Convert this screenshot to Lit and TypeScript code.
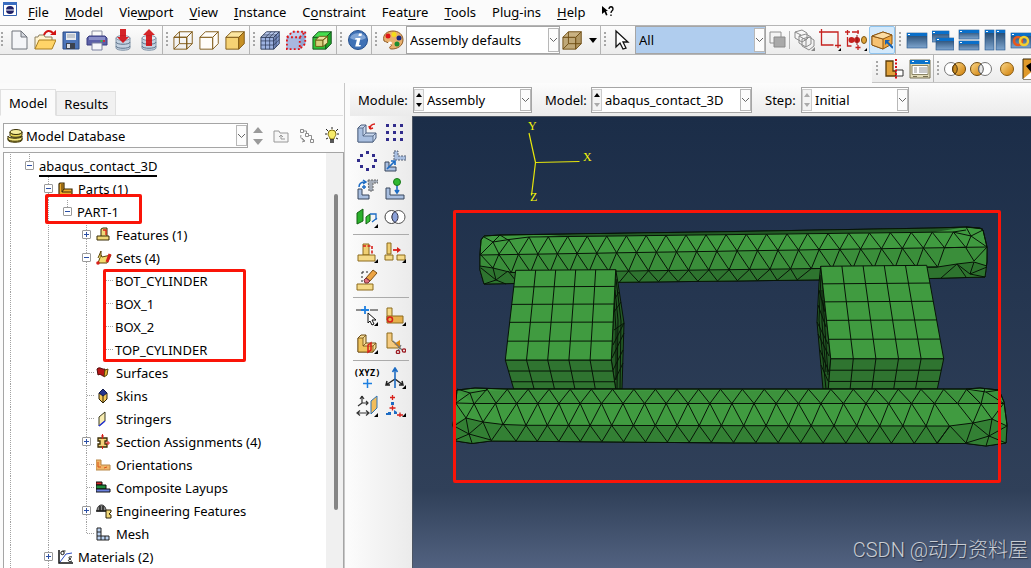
import { LitElement, html, svg, css, TemplateResult } from "lit";
import { customElement, property } from "lit/decorators.js";

type Glyph = TemplateResult;

/* ---------- small drawing helpers ---------- */

const corner = svg`<path d="M22 18v4h-4z" fill="#000"/>`;
const steel = "#a9bfe0";

const cube = (front: string, top: string, side: string, line: string) => svg`
  <path d="M1 8h14v13H1z" fill=${front} stroke=${line}/>
  <path d="M1 8l6-6h14l-6 6z" fill=${top} stroke=${line} stroke-linejoin="round"/>
  <path d="M15 8l6-6v13l-6 6z" fill=${side} stroke=${line} stroke-linejoin="round"/>`;

const disk = svg`
  <path d="M4 9v10c0 3 14 3 14 0V9" fill="#c5d3e2" stroke="#8496a8"/>
  <ellipse cx="11" cy="9" rx="7" ry="2.500" fill="#e3ebf3" stroke="#8496a8"/>
  <path d="M4 13c0 3 14 3 14 0M4 17c0 3 14 3 14 0" fill="none" stroke="#60758c"/>`;

const win = (x: number, y: number, w: number, h: number) => svg`
  <rect x=${x} y=${y} width=${w} height=${h} fill="url(#blue)" stroke="#1c4f86" stroke-width=".6"/>
  <rect x=${x} y=${y} width=${w} height="3" fill="#0a6fc9"/>
  <rect x=${x + 1} y=${y + 1} width="2" height="1" fill="#fff"/>`;

const blueDefs = svg`<defs><linearGradient id="blue" x1="0" y1="0" x2="0" y2="1">
  <stop offset="0" stop-color="#1a3f66"/><stop offset="1" stop-color="#7fa6cf"/></linearGradient></defs>`;

const ell = (fill: string, side: string, line: string) => svg`
  <path d="M2 6l3-3h5v8h7l3 0v5l-3 4H2z" fill=${side} stroke=${line}/>
  <path d="M2 6h5v8h10v6H2z" fill=${fill} stroke=${line} stroke-width=".8"/>
  <path d="M7 6l3-3M7 14l3-3M17 14l3-3" fill="none" stroke=${line} stroke-width=".8"/>`;

const orb = svg`<defs><linearGradient id="orb" x1="0" y1="0" x2="1" y2="1">
  <stop offset="0" stop-color="#fbd88a"/><stop offset="1" stop-color="#cf7d05"/></linearGradient></defs>`;

/* ---------- icons on a 22 x 22 grid ---------- */

const icons: Record<string, Glyph> = {
  new: svg`<path d="M4 2h9l6 6v12H4z" fill="#f4f5f8" stroke="#70747c"/><path d="M13 2v6h6z" fill="#d3d6dd" stroke="#70747c"/>`,
  open: svg`<path d="M1 20V8h3l1-2h5l1 2h7v4" fill="#fff3cf" stroke="#8d8060"/>
    <path d="M1 20l4-9h17l-4 9z" fill="#ffd468" stroke="#a87d1f"/>
    <path d="M10 6c2-5 6-5 9-2" fill="none" stroke="#d11313" stroke-width="2"/><path d="M16 6h6V1z" fill="#d11313"/>`,
  save: svg`<path d="M3 3h16v17H3z" fill="#4c74b8" stroke="#2a4a86"/><path d="M6 4h10v7H6z" fill="#e8ebef"/>
    <path d="M7 6h8M7 8h8" stroke="#9aa3ad"/><path d="M6 14h9v6H6z" fill="#3b4250"/><path d="M7 15h3v4H7z" fill="#d8dde5"/>`,
  print: svg`<path d="M6 2h10v6H6z" fill="#fafafa" stroke="#8b8fa0"/><path d="M1 9l2-2h16l2 2v7H1z" fill="#5c61a8" stroke="#393d80"/>
    <path d="M3 8h16v3H3z" fill="#8a8fc8"/><path d="M6 14h10v7H6z" fill="#f6f7fa" stroke="#7b80a0"/><circle cx="18" cy="12" r="1" fill="#e22"/><circle cx="15.500" cy="12" r="1" fill="#3c3"/>`,
  pull: svg`${disk}<path d="M8 0h6v8h3l-6 6-6-6h3z" fill="#cf0d12" opacity=".9"/>`,
  push: svg`${disk}<path d="M11 0l6 6h-3v11H8V6H5z" fill="#cf0d12" opacity=".9"/>`,
  wire: svg`${cube("none", "none", "none", "#7c5510")}<path d="M7 2v13h14M7 15l-6 6" fill="none" stroke="#7c5510"/>`,
  hidden: cube("#fffdf8", "#fffdf8", "#fffdf8", "#7c5510"),
  shaded: cube("#f5d274", "#fbe6a0", "#c79025", "#7c5510"),
  meshcube: svg`${cube("#9db2e0", "#b9c9ec", "#8298cb", "#2c3a58")}<path d="M6 8v13M10.500 8v13M1 12h14l6-6M1 16.500h14l6-6M3.500 5.500h14v13M6 8l6-6M10.500 8l6-6" fill="none" stroke="#2c3a58" stroke-width=".8"/>`,
  seedcube: svg`${cube("#a9b8e0", "#c2cdec", "#93a4d0", "#a9b8e0")}<path d="M1 8h14v13H1zM1 8l6-6h14v13l-6 6M15 8l6-6" fill="none" stroke="#e01414" stroke-width="2" stroke-dasharray="2 2.500"/>`,
  greencube: svg`${cube("#2fc238", "#45dd4e", "#20a52a", "#12501a")}<path d="M4 11h8v7H4z" fill="#d9cf7d" stroke="#6b5d14"/><path d="M4 11l4-4h9l-5 4zM12 11l5-4v7l-5 4z" fill="#e9e0a0" stroke="#6b5d14"/>`,
  info: svg`<circle cx="11" cy="11" r="9.500" fill="#3f71b5" stroke="#24508f"/><path d="M3 9a8.500 7 0 0 1 16 0c-5 3-11 3-16 0z" fill="#7fa4d6"/>
    <path d="M12 4.500h3l-.6 2.500h-3zM8.500 9h5l-1.600 7h2l-.5 1.500H8.200l1.700-7H8z" fill="#fff"/>`,
  palette: svg`<path d="M2 12C0 5 6 2 11 2s10 3 10 9-6 9-11 9c-3 0-3-2-1-3s-2-3-7-5z" fill="#e8b06d" stroke="#8d5a24"/>
    <circle cx="6" cy="7" r="2.500" fill="#dd1717"/><circle cx="12" cy="5.500" r="2.500" fill="#f4dc18"/><circle cx="17" cy="9" r="2.500" fill="#17277d"/><circle cx="15" cy="15" r="2.500" fill="#1b8c2e"/><ellipse cx="8" cy="14" rx="2" ry="1.500" fill="#fff"/>`,
  cubeTan: svg`${cube("#bfa878", "#c9b283", "#b19763", "#6d4d12")}<path d="M7 2v13h14M7 15l-6 6" fill="none" stroke="#6d4d12"/>`,
  arrow: svg`<path d="M5 2l12 11h-5l3 6-3 1-3-6-4 4z" fill="#fff" stroke="#111" stroke-width="1.300"/>`,
  overlap: svg`<path d="M3 3h11v11H3z" fill="#f3f3f3" stroke="#909090"/><path d="M7 8h11v10H7z" fill="#a9a9a9" stroke="#8a8a8a"/>`,
  depth: svg`<path d="M2 3l7-2 5 3v6l-5 3-7-4zM6 7l7-2 5 3v7l-5 3-7-4zM9 10l7-2 5 3v6l-5 4-7-4zM2 3l6 3M6 7l7 4v7M16 8l-3 3" fill="none" stroke="#8b8b8b"/><path d="M22 18v4h-4z" fill="#888"/>`,
  rectPick: svg`<path d="M0 3h5M2.500 0v6M5 3h14v11M2.500 6v10h12" fill="none" stroke="#c5221f" stroke-width="1.300"/><path d="M16 16.500h6M19 14v5" stroke="#c5221f" stroke-width="1.300"/><path d="M22 19v3h-3z"/>`,
  ptPick: svg`<path d="M0 3h5M2.500 1v5M7 3h7M13 1v4M2.500 8v9h4M13 16v5M10.500 18.500h5" fill="none" stroke="#c5221f" stroke-width="1.300"/><circle cx="6.500" cy="11" r="3" fill="#c5221f"/><circle cx="12" cy="11" r="3" fill="#c5221f"/><path d="M12 6v10" stroke="#8d120f"/><ellipse cx="19" cy="11" rx="2.500" ry="3.500" fill="#e0a53a" stroke="#7a5310"/><path d="M22 19v3h-3z"/>`,
  box: svg`<path d="M1 7l11-4 9 3v9l-9 5-11-4z" fill="#eda63f" stroke="#8d5713"/><path d="M1 7l11 3v10l-11-4z" fill="#f6c272" stroke="#8d5713"/><path d="M1 7l11-4 9 3-9 4z" fill="#fbdca2" stroke="#8d5713"/>
    <path d="M22 19l-7-7" fill="none" stroke="#1562b5" stroke-width="2"/><path d="M14 11h5l-5 5z" fill="#1562b5"/>`,
  win1: svg`${blueDefs}${win(1, 4, 20, 15)}`,
  win2: svg`${blueDefs}${win(0, 2, 17, 11)}${win(4, 9, 18, 12)}`,
  win3: svg`${blueDefs}${win(1, 1, 20, 9)}${win(1, 12, 20, 9)}`,
  win4: svg`${blueDefs}${win(1, 1, 9, 20)}${win(12, 1, 9, 20)}`,
  winlink: svg`${blueDefs}${win(1, 4, 20, 15)}<circle cx="8" cy="12" r="4" fill="none" stroke="#e8571c" stroke-width="2.500"/><circle cx="14" cy="12" r="4" fill="none" stroke="#f3cf2d" stroke-width="2.500"/>`,
  cutL: svg`<path d="M3 3h7v10h3v5H3z" fill="#e0a13a" stroke="#5b3d0b" stroke-width="1.300"/><path d="M13 12h7v6h-7z" fill="#fff" stroke="#333"/><path d="M13 1v21" stroke="#d80f1a" stroke-width="2" stroke-dasharray="2 1.500"/>`,
  table: svg`<path d="M1 2h20v18H1z" fill="#e3dcb8" stroke="#777053"/><path d="M1 2h20v4H1z" fill="#0b74cc"/><path d="M3 3.500h2M16 3.500h3" stroke="#fff"/><path d="M3 7.500h16v9H3z" fill="#fff" stroke="#8a8465"/><path d="M5 10h3M10 10h8M5 12h3M10 12h8M5 14h3M10 14h8" stroke="#777" stroke-width=".8"/><path d="M4 18.500h4M14 18.500h5" stroke="#777053"/>`,
  vennR: svg`${orb}<circle cx="7" cy="11" r="6.500" fill="#fff" stroke="#777"/><circle cx="15" cy="11" r="6.500" fill="url(#orb)" stroke="#6e4a10"/><path d="M11 6a6.500 6.500 0 0 1 0 10a6.500 6.500 0 0 1 0-10z" fill="#c98a1e" stroke="#4e3510"/>`,
  vennL: svg`${orb}<circle cx="7" cy="11" r="6.500" fill="url(#orb)" stroke="#6e4a10"/><circle cx="15" cy="11" r="6.500" fill="#fff" stroke="#777"/><path d="M11 6a6.500 6.500 0 0 1 0 10a6.500 6.500 0 0 1 0-10z" fill="#e9e9e9" stroke="#555"/>`,
  ball: svg`${orb}<circle cx="11" cy="11" r="6.500" fill="url(#orb)" stroke="#8a5c12"/>`,
  split: svg`<path d="M1 1h21v20H1z" fill="#e09a2a" stroke="#3a2a0a"/><path d="M22 3v18H1z" fill="#fff"/><path d="M4 8l6-4v3h10v4H9v3z" fill="#000"/>`,

  /* tree toolbar */
  upfolder: svg`<path d="M4 17V6h5l1 2h8v9z" fill="#f6f6f6" stroke="#989898"/><path d="M9 12l2-2 2 2M11 10v4h4" fill="none" stroke="#989898"/>`,
  links: svg`<path d="M4.500 4.500h3v3h-3zM9.500 8.500h3v3h-3zM14.500 14.500h3v3h-3zM7.500 6h3v2.500M12.500 10.500h3v4M5 10c-1 3 1 5 4 6M6 13l3 3-3 1" fill="none" stroke="#8d8d8d"/>`,
  bulb: svg`<path d="M7 9a4 4 0 0 1 8 0c0 2-2 3-2 5H9c0-2-2-3-2-5z" fill="#f7ec6a" stroke="#7c6a0c"/><path d="M9 15h4M9 17h4" stroke="#222" stroke-width="1.500"/><path d="M11 2v2M5 4l2 2M17 4l-2 2M4 9h2M16 9h2M5 14l2-1M17 14l-2-1" stroke="#222"/>`,

  /* assembly tools */
  instance: svg`${ell(steel, "#c9d8ee", "#4a5d7c")}<path d="M14 7c0-3 2-5 5-5M14 7l-1-3M14 7l3-1" stroke="#d8201a" stroke-width="1.600" fill="none"/>`,
  grid: svg`<path d="M2 2h3v3H2zM9 2h3v3H9zM16 2h3v3h-3zM2 9h3v3H2zM9 9h3v3H9zM16 9h3v3h-3zM2 16h3v3H2zM9 16h3v3H9zM16 16h3v3h-3z" fill="#312c8c"/>`,
  radial: svg`<path d="M10 1h3v3h-3zM10 18h3v3h-3zM1 9h3v3H1zM18 9h3v3h-3zM4 4h3v3H4zM16 4h3v3h-3zM4 15h3v3H4zM16 15h3v3h-3z" fill="#312c8c"/>`,
  translate: svg`<path d="M10 1h4v5h8v4H10z" fill=${steel} stroke="#555f70" stroke-dasharray="2 1"/><path d="M1 12h4v5h7v4H1z" fill=${steel} stroke="#39465c"/><path d="M3 19l8-8M7 11h4v4" fill="none" stroke="#1d6cc4" stroke-width="1.700"/>`,
  rotate: svg`<path d="M12 2h10v3h-5v8h-4z" fill="#a4acb8" stroke="#666" stroke-dasharray="2 1"/><path d="M2 11h4v6h7v4H2z" fill=${steel} stroke="#39465c"/><path d="M3 9c0-4 2-5 6-5M7 2l3 2-3 2M6 9h4M8 7v4" fill="none" stroke="#1d6cc4" stroke-width="1.500"/>`,
  drop: svg`<path d="M2 10h4v7h14v4H2z" fill=${steel} stroke="#39465c"/><path d="M13 7v8M11 12l2 3 2-3" fill="none" stroke="#1d6cc4" stroke-width="1.600"/><circle cx="13" cy="4" r="3.500" fill="#2fb830" stroke="#19771a"/>`,
  parallel: svg`<path d="M1 7l6-4v12l-6 3z" fill="#2bb02b" stroke="#136213"/><path d="M10 11l4-3v7l-4 3z" fill="#38c238" stroke="#136213"/><path d="M14 8h6v6M21 12l-5 4" fill="none" stroke="#1d6cc4" stroke-width="1.300"/>${corner}`,
  merge: svg`<circle cx="7.500" cy="11" r="6.500" fill="#fff" stroke="#444"/><circle cx="14.500" cy="11" r="6.500" fill="#fff" stroke="#555"/><path d="M11 5.500a6.500 6.500 0 0 1 0 11a6.500 6.500 0 0 1 0-11z" fill="#8aa0d8" stroke="#334"/>`,
  pillar: svg`<path d="M7 3h6v11H7z" fill="#f0cf72" stroke="#8c6b1d"/><path d="M2 14h17v6H2z" fill="#f5da88" stroke="#8c6b1d"/><path d="M7 5h9v9" fill="none" stroke="#d8201a" stroke-width="1.600" stroke-dasharray="3 1.500"/>${corner}`,
  pillar2: svg`<path d="M3 2h4v11H3z" fill="#f0cf72" stroke="#8c6b1d"/><path d="M1 14h8v5H1zM13 14h8v5h-8z" fill="#f5da88" stroke="#8c6b1d"/><path d="M9 9h5" stroke="#d8201a" stroke-width="1.800"/><path d="M13 6l4 3-4 3z" fill="#d8201a"/>${corner}`,
  erase: svg`<path d="M1 15h16v6H1z" fill="#f5da88" stroke="#8c6b1d"/><path d="M6 3v11M6 3h8" stroke="#222" stroke-dasharray="2 2"/><path d="M10 9l7-8 4 3-7 8z" fill="#eda443" stroke="#7c4f14"/><path d="M8 11l2-2 4 3-2 2-3 0z" fill="#e16f7f" stroke="#733"/>`,
  axisPick: svg`<path d="M0 6h5M14 6h9" stroke="#222"/><path d="M5 6h8M9 2v8" stroke="#1d7fe0" stroke-width="1.800"/><path d="M12 9l8 7h-4l2 4-2 1-2-4-2 2z" fill="#fff" stroke="#111"/>${corner}`,
  plate: svg`<path d="M3 4h5v12H3z" fill="#f5da88" stroke="#8c6b1d"/><path d="M3 12h16v7H3z" fill="#e6b04c" stroke="#8c6b1d"/><circle cx="6" cy="15.500" r="2.500" fill="none" stroke="#d8201a" stroke-width="1.500"/>${corner}`,
  partGold: svg`${ell("#efc45d", "#f8de98", "#6d4d12")}<path d="M12 13l3-2v7l-3 2z" fill="none" stroke="#d8201a" stroke-width="1.500"/>${corner}`,
  cutTool: svg`<path d="M3 1h5v8l8 5-2 2H3z" fill="#f5cb80" stroke="#8c6b1d"/><path d="M10 12l6-4v8z" fill="#dd8a14"/><path d="M9 9l9 9M14 19l3-6" stroke="#777" stroke-width="1.200"/><circle cx="14" cy="20" r="1.700" fill="none" stroke="#9c1a22" stroke-width="1.300"/><circle cx="20" cy="18.500" r="1.700" fill="none" stroke="#9c1a22" stroke-width="1.300"/>`,
  axes: svg`<path d="M11 12l-9 6M11 12l8 6M3 14l-1 4h4M18 14l1 4h-4" stroke="#222" stroke-width="1.500" fill="none"/><path d="M11 1v20M8.500 5L11 1l2.500 4" stroke="#1d6cc4" stroke-width="1.600" fill="none"/>${corner}`,
  planeTool: svg`<path d="M6 2v6M6 8h6M6 8l-4 3M2 18h10M6 1l-2 3M6 1l2 3M4 15.500L1 18l3 2.500M10 15.500l3 2.500-3 2.500M10 6l2 2-2 2" fill="none" stroke="#333" stroke-width="1.200"/><path d="M15 6l6-5v12l-6 6z" fill="#f2bd5b" stroke="#2e72b5"/>${corner}`,
  csysPts: svg`<path d="M6 2.500h5M8.500 0v5M5.500 13h6M8.500 10.500v5M13 20h6M16 17.500v4.500" stroke="#d8201a" stroke-width="1.300"/><path d="M7 7h3v3H7zM4 17h3v3H4zM10 15l3 2v2h-3zM2 18h2v2H2z" fill="#1d6cc4"/>${corner}`,
};

/* Icons drawn with a one-pixel margin inside their button. */
const inset = new Set(["wire", "hidden", "shaded", "meshcube", "seedcube", "greencube", "cubeTan"]);

/* ---------- tree icons on a 16 x 16 grid ---------- */

const treeIcons: Record<string, Glyph> = {
  db: svg`<g stroke="#3b3208"><path d="M1 12c0 3 14 3 14 0v-2H1z" fill="#e4d256"/><path d="M1 8c0 3 14 3 14 0v3c0 3-14 3-14 0z" fill="#f3e57d"/><path d="M3 4c0 3 12 3 12 0v3c0 3-13 3-12 0z" fill="#e4d256"/><ellipse cx="9" cy="4" rx="6" ry="2.500" fill="#f7ee9f"/></g>`,
  part: svg`<path d="M1 3l1-1h4v6h8v5l-1 1H1z" fill="#eda92b" stroke="#3d2a05" stroke-width="1.200"/><path d="M4 3v8h9M6 8l-2 3" fill="none" stroke="#3d2a05"/>`,
  features: svg`<path d="M5 2l2-1h4v9H5z" fill="#f0d878" stroke="#3a2c06"/><path d="M1 9h12v4H1z" fill="#f0d878" stroke="#3a2c06"/><path d="M7 3h3v5" fill="none" stroke="#d8201a" stroke-width="1.300"/>`,
  sets: svg`<path d="M2 13l3-8 1 2 9-2-4 8z" fill="#f3dc6d" stroke="#5a4308"/><path d="M14 4l-3 8" stroke="#d8201a" stroke-width="3"/><circle cx="2" cy="13" r="1.800" fill="#d8201a"/><path d="M2 8l3-7v6" fill="#f3dc6d" stroke="#5a4308"/>`,
  surfaces: svg`<path d="M1 4c3-3 5 1 8 0v7c-3 1-4-3-7-1z" fill="#b81616" stroke="#4d0b0b"/><path d="M9 5l3-1-1 6-3 2z" fill="#eab932" stroke="#5a4308"/>`,
  skins: svg`<path d="M7 1l4 4v6l-4 4-4-4V5z" fill="#f3c85a" stroke="#2c2106"/><path d="M7 1l4 4-4 3-4-3z" fill="#26368e" stroke="#111a4d"/><path d="M7 8v7" stroke="#2c2106"/>`,
  stringers: svg`<path d="M3 6l6-5v9l-6 5z" fill="#f8ecb0" stroke="#3a3a20"/><path d="M3 15l6-5" fill="none" stroke="#2433d8" stroke-width="1.500"/>`,
  section: svg`<path d="M2 4h9v3H9v3h2v3H2v-3h2V7H2z" fill="#f3d27a" stroke="#3a2c06" stroke-width="1.300"/><path d="M6.500 0v5M5 2h3M9 9h5M12 7v4M6.500 12v3" stroke="#d8201a"/>`,
  orient: svg`<path d="M0 3h5v5h9v5H0z" fill="#f1b466" stroke="#b9894a"/><path d="M2 5v5h3M8 11l3-1" stroke="#d8521a" fill="none"/>`,
  layups: svg`<path d="M0 2h6v3H0z" fill="#d82a2a" stroke="#111"/><path d="M0 5h10v4H0z" fill="#1f8b3b" stroke="#111"/><path d="M0 9h14v3H0z" fill="#6c82e0" stroke="#111"/>`,
  eng: svg`<path d="M1 8c0-8 9-8 9 0z" fill="#8d8d8d" stroke="#222"/><path d="M0 8h11M4 3v5M7 3v5" stroke="#222" stroke-width="1.500"/><path d="M10 7h5v2l-2 2 2 1v3h-5z" fill="#f0d878" stroke="#2c2106"/>`,
  mesh: svg`<path d="M1 2h4v8h8v4H1zM1 6h4M1 10h4v4M9 10v4" fill="#bcd3f2" stroke="#222"/>`,
  materials: svg`<path d="M1 1v13h14" fill="none" stroke="#111" stroke-width="1.500"/><path d="M2 13l6-8 6-1" fill="none" stroke="#2b4bc0"/><circle cx="4.500" cy="4" r="1.700" fill="none" stroke="#111"/><path d="M4.500 2h3M14 8c-4-1-4 2-1 2-4 0-3 4 1 2" fill="none" stroke="#111"/>`,
};

const icon = (name: string) => html`<svg width="22" height="22" viewBox=${inset.has(name) ? "0 -1 24 24" : "0 0 22 22"} aria-hidden="true">${icons[name]}</svg>`;
const treeIcon = (name: string) => html`<svg width="16" height="16" viewBox="0 0 16 16" aria-hidden="true">${treeIcons[name]}</svg>`;

const base = css`
  :host { display: block; box-sizing: border-box; }
  *, *::before, *::after { box-sizing: border-box; }
  button, select { font: inherit; color: inherit; margin: 0; padding: 0; border: 0; background: none; border-radius: 0; }
  svg { display: block; flex: none; }
`;

/* ---------- drop-down box, optionally with a spinner at its left ---------- */

@customElement("combo-box")
class ComboBox extends LitElement {
  @property() label = "";
  @property() value = "";
  @property() picture = "";
  @property({ type: Boolean }) spinner = false;
  @property({ type: Boolean }) first = false;
  static styles = [base, css`
    .box { display: flex; height: 100%; border: 1px solid #a5a5a5; background: var(--combo-bg, #fff); align-items: stretch; }
    .spin { display: flex; flex-direction: column; width: 10px; margin: 1px 0; border: 1px solid #ccc; background: #f3f3f3; }
    .spin button { flex: 1; display: grid; place-items: center; }
    .pic { display: grid; place-items: center; width: 19px; padding-left: 2px; }
    .field { flex: 1; min-width: 0; display: grid; align-items: stretch; }
    select { grid-area: 1 / 1; appearance: none; width: 100%; padding: 0 14px 0 3px; outline: none; text-overflow: ellipsis; }
    .drop { grid-area: 1 / 1; justify-self: end; width: 11px; margin: 1px 0; background: #fcfcfc; border: 1px solid #b8b8b8; display: grid; place-items: center; pointer-events: none; }
    .off { color: #aaa; }
  `];
  render() {
    const tip = (d: string) => html`<svg width="6" height="4" viewBox="0 0 6 4"><path d=${d} fill="currentColor"/></svg>`;
    return html`<div class="box">
      ${this.spinner ? html`<div class="spin">
        <button class=${this.first ? "off" : ""} aria-label="Previous">${tip("M3 0l3 4H0z")}</button>
        <button class=${this.value === "Assembly" ? "" : "off"} aria-label="Next">${tip("M0 0h6L3 4z")}</button></div>` : ""}
      ${this.picture ? html`<span class="pic">${treeIcon(this.picture)}</span>` : ""}
      <span class="field">
        <select aria-label=${this.label}><option>${this.value}</option></select>
        <span class="drop"><svg width="9" height="6" viewBox="0 0 9 6"><path d="M1 1l3.500 3.500L8 1" fill="none" stroke="#666"/></svg></span>
      </span></div>`;
  }
}

/* ---------- menu bar ---------- */

@customElement("menu-bar")
class MenuBar extends LitElement {
  static styles = [base, css`
    nav { display: flex; align-items: center; gap: 16px; height: 25px; padding: 0 0 2px 3px; overflow: hidden; }
    .logo { margin-right: -5px; align-self: flex-start; padding-top: 2px; }
    button { white-space: nowrap; }
    u { text-decoration-thickness: 1px; text-underline-offset: 2px; }
  `];
  items: [string, string, string][] = [
    ["", "F", "ile"], ["", "M", "odel"], ["Vie", "w", "port"], ["", "V", "iew"], ["", "I", "nstance"],
    ["C", "o", "nstraint"], ["Feat", "u", "re"], ["", "T", "ools"], ["Plu", "g", "-ins"], ["", "H", "elp"],
  ];
  render() {
    return html`<nav>
      <span class="logo"><svg width="14" height="14" viewBox="0 0 14 14"><path d="M.5.5h13v13H.5z" fill="#fff" stroke="#2f5fae"/><path d="M0 0h14v3H0z" fill="#3a6dc0"/><ellipse cx="7" cy="8" rx="4" ry="4" fill="#1d1f66"/><path d="M2 8h10" stroke="#fff"/></svg></span>
      ${this.items.map(([a, k, b]) => html`<button>${a}<u>${k}</u>${b}</button>`)}
      <button aria-label="Context help"><svg width="14" height="14" viewBox="0 0 14 14"><path d="M1 1l6 5H5l1.500 4-1.500.6L3.500 7 1 9z"/><path d="M8 4c0-3 4-3 4 0 0 2-2 1.500-2 4M10 9.500v1.500" fill="none" stroke="#000" stroke-width="1.300"/></svg></button>
    </nav>`;
  }
}

/* ---------- toolbars ---------- */

@customElement("tool-group")
class ToolGroup extends LitElement {
  @property({ type: Boolean }) last = false;
  static styles = [base, css`
    :host { flex: none; }
    .group { display: flex; align-items: center; height: 100%; border-right: 1px solid #b5b5b5; }
    .group.last { border-right: 0; }
    .grip { width: 2px; height: 16px; margin: 0 3px; flex: none; background: repeating-linear-gradient(#a6a6a6 0 2px, transparent 2px 4px); }
  `];
  render() {
    return html`<div class="group ${this.last ? "last" : ""}"><span class="grip"></span><slot></slot></div>`;
  }
}

@customElement("tool-button")
class ToolButton extends LitElement {
  @property() name = "";
  @property({ type: Boolean }) active = false;
  static styles = [base, css`
    :host { flex: none; width: 26px; height: 28px; }
    button { width: 100%; height: 100%; display: grid; place-items: center; border: 1px solid transparent; }
    .active { background: #d3e9fb; border-color: #8fc5f0; border-radius: 2px; }
  `];
  render() {
    return html`<button class=${this.active ? "active" : ""} aria-label=${this.name}>${icon(this.name)}</button>`;
  }
}

@customElement("tool-bars")
class ToolBars extends LitElement {
  static styles = [base, css`
    .row { display: flex; height: 30px; border-top: 1px solid #b5b5b5; border-bottom: 1px solid #b5b5b5; background: linear-gradient(#fcfcfc, #ececec); overflow: hidden; }
    .row tool-group:first-child { margin-left: -2px; }
    .under { display: flex; height: 28px; justify-content: flex-end; overflow: hidden; background: #fafafa; }
    .dock { display: flex; width: 159px; padding-left: 1px; overflow: hidden; background: linear-gradient(#fcfcfc, #ececec); border-bottom: 1px solid #c4c4c4; }
    .scheme { width: 154px; height: 28px; }
    .filter { width: 131px; height: 28px; --combo-bg: #b0cdee; }
    .caret { width: 14px; height: 28px; display: grid; place-items: center; }
    .bar { width: 1px; height: 18px; background: #b5b5b5; margin: 0 1px; }
    .narrow { width: 22px; }
  `];
  btn = (n: string) => html`<tool-button name=${n}></tool-button>`;
  render() {
    return html`<div class="row">
        <tool-group>${["new", "open", "save", "print", "pull", "push"].map(this.btn)}</tool-group>
        <tool-group>${["wire", "hidden", "shaded"].map(this.btn)}</tool-group>
        <tool-group>${["meshcube", "seedcube", "greencube"].map(this.btn)}</tool-group>
        <tool-group>${this.btn("info")}</tool-group>
        <tool-group>${this.btn("palette")}
          <combo-box class="scheme" label="Colour code" value="Assembly defaults"></combo-box>
          ${this.btn("cubeTan")}
          <button class="caret" aria-label="Render options"><svg width="8" height="5" viewBox="0 0 8 5"><path d="M0 0h8L4 5z"/></svg></button>
        </tool-group>
        <tool-group>${this.btn("arrow")}
          <combo-box class="filter" label="Selection filter" value="All"></combo-box>
          <tool-button class="narrow" name="overlap"></tool-button><span class="bar"></span>
          ${["depth", "rectPick", "ptPick"].map(this.btn)}<tool-button name="box" active></tool-button>
        </tool-group>
        <tool-group last>${["win1", "win2", "win3", "win4", "winlink"].map(this.btn)}</tool-group>
      </div>
      <div class="under"><div class="dock">
        <tool-group>${["cutL", "table"].map(this.btn)}</tool-group>
        <tool-group last>${["vennR", "vennL", "ball", "split"].map(this.btn)}</tool-group>
      </div></div>`;
  }
}

/* ---------- model tree ---------- */

interface Row { text: string; guides: string; pic?: string; root?: boolean; }

/* One letter per indent column: space = empty, | = line, + and - = expander,
   t = leaf branch, e = last leaf, * = expander closing its line. */
const rows: Row[] = [
  { text: "abaqus_contact_3D", guides: "|*", root: true },
  { text: "Parts (1)", guides: "| -", pic: "part" },
  { text: "PART-1", guides: "| |*" },
  { text: "Features (1)", guides: "| | +", pic: "features" },
  { text: "Sets (4)", guides: "| | -", pic: "sets" },
  { text: "BOT_CYLINDER", guides: "| | |t" },
  { text: "BOX_1", guides: "| | |t" },
  { text: "BOX_2", guides: "| | |t" },
  { text: "TOP_CYLINDER", guides: "| | |e" },
  { text: "Surfaces", guides: "| | t", pic: "surfaces" },
  { text: "Skins", guides: "| | t", pic: "skins" },
  { text: "Stringers", guides: "| | t", pic: "stringers" },
  { text: "Section Assignments (4)", guides: "| | +", pic: "section" },
  { text: "Orientations", guides: "| | t", pic: "orient" },
  { text: "Composite Layups", guides: "| | t", pic: "layups" },
  { text: "Engineering Features", guides: "| | +", pic: "eng" },
  { text: "Mesh", guides: "| | e", pic: "mesh" },
  { text: "Materials (2)", guides: "| +", pic: "materials" },
];

@customElement("model-tree")
class ModelTree extends LitElement {
  static styles = [base, css`
    :host { display: flex; flex-direction: column; width: 345px; flex: none; min-height: 0; padding-top: 6px; background: #fbfbfb; border-right: 1px solid #c8c8c8; }
    .tabs { display: flex; align-items: flex-end; height: 27px; margin-right: 1px; box-shadow: inset 0 -1px #e0e0e0; }
    .tab { height: 25px; padding: 0 7px; border: 1px solid #e0e0e0; background: #f1f1f1; }
    .tab.on { height: 27px; padding: 0 8px; background: #fbfbfb; border-bottom-color: #fbfbfb; }
    .head { display: flex; align-items: center; padding: 7px 0 4px 3px; }
    .db { width: 245px; height: 25px; flex: none; }
    .updown { display: grid; gap: 6px; width: 20px; flex: none; justify-items: center; }
    .tool { width: 26px; height: 22px; flex: none; display: grid; place-items: center; }
    .tool:last-child { width: 24px; }
    .pane { flex: 1; min-height: 0; display: flex; margin-left: 3px; border: 1px solid #a5a5a5; border-width: 1px 1px 0 1px; background: #fff; overflow: hidden; }
    .list { position: relative; flex: 1; margin: 0; padding: 1px 0 0; list-style: none; overflow: hidden; }
    .row { display: flex; align-items: center; height: 23px; white-space: nowrap; }
    .g { width: 19px; height: 23px; flex: none; display: grid; place-items: center; background: repeating-linear-gradient(#a2a2a2 0 1px, #fff 1px 2px) no-repeat 9px 0 / 0 0; }
    .g:first-child { width: 16px; background-position: 6px 0; }
    .line { background-size: 1px 23px; }
    .half { background-size: 1px 12px; }
    .branch::after { content: ""; width: 8px; height: 1px; margin-left: 8px; background: repeating-linear-gradient(90deg, #a2a2a2 0 1px, #fff 1px 2px); }
    .ex { width: 9px; height: 9px; border: 1px solid #9a9a9a; border-radius: 1px; background: #fff; display: grid; place-items: center; }
    .ico { width: 20px; flex: none; }
    .root { line-height: 17px; margin-top: 3px; border-bottom: 2px solid #000; }
    .mark { position: absolute; border: 3px solid #fa1408; border-radius: 2px; pointer-events: none; }
    .m1 { left: 41px; top: 41px; width: 97px; height: 30px; }
    .m2 { left: 99px; top: 116px; width: 143px; height: 93px; }
    .scroll { width: 17px; flex: none; background: #f0f0f0; padding: 41px 5px 0 8px; }
    .thumb { height: 316px; background: #858585; border-radius: 2px; }
  `];
  cell(c: string) {
    if (c === " ") return html`<span class="g"></span>`;
    if (c === "|") return html`<span class="g line"></span>`;
    if (c === "t") return html`<span class="g line branch"></span>`;
    if (c === "e") return html`<span class="g half branch"></span>`;
    return html`<span class="g ${c === "*" ? "half" : "line"}"><button class="ex" aria-label="Toggle">
      <svg width="5" height="5" viewBox="0 0 5 5"><path d=${c === "+" ? "M0 2.5h5M2.5 0v5" : "M0 2.5h5"} stroke="#2b4fa5"/></svg></button></span>`;
  }
  render() {
    return html`
      <div class="tabs"><button class="tab on">Model</button><button class="tab">Results</button></div>
      <div class="head">
        <combo-box class="db" label="Database" picture="db" value="Model Database"></combo-box>
        <span class="updown"><svg width="10" height="6" viewBox="0 0 10 6"><path d="M5 0l5 6H0z" fill="#9a9a9a"/></svg><svg width="10" height="6" viewBox="0 0 10 6"><path d="M0 0h10L5 6z" fill="#9a9a9a"/></svg></span>
        <button class="tool" aria-label="Up">${icon("upfolder")}</button>
        <button class="tool" aria-label="Links">${icon("links")}</button>
        <button class="tool" aria-label="Tips">${icon("bulb")}</button>
      </div>
      <div class="pane">
        <ul class="list">
          ${rows.map(r => html`<li class="row">${[...r.guides].map(c => this.cell(c))}${r.pic ? html`<span class="ico">${treeIcon(r.pic)}</span>` : ""}<span class=${r.root ? "root" : ""}>${r.text}</span></li>`)}
          <li class="mark m1" aria-hidden="true"></li><li class="mark m2" aria-hidden="true"></li>
        </ul>
        <div class="scroll"><div class="thumb"></div></div>
      </div>`;
  }
}

/* ---------- tool box at the left of the viewport ---------- */

@customElement("tool-box")
class ToolBox extends LitElement {
  static styles = [base, css`
    :host { flex: none; width: 62px; background: linear-gradient(90deg, #fbfbfb, #ebebeb); }
    .section { display: grid; grid-template-columns: 28px 28px; padding: 3px 0; margin: 0 3px; border-bottom: 1px solid #ababab; }
    .section:last-child { border-bottom: 0; }
    button { width: 28px; height: 28px; display: grid; place-items: center; }
    .xyz { font: bold 9px "DejaVu Sans Mono", monospace; line-height: 10px; }
    .xyz svg { margin: 1px auto 0; }
  `];
  sections = [
    ["instance", "grid", "radial", "translate", "rotate", "drop", "parallel", "merge"],
    ["pillar", "pillar2", "erase"],
    ["axisPick", "plate", "partGold", "cutTool"],
    ["xyz", "axes", "planeTool", "csysPts"],
  ];
  render() {
    return this.sections.map(s => html`<div class="section">${s.map(n => n === "xyz"
      ? html`<button class="xyz"><span>(XYZ)<svg width="9" height="9" viewBox="0 0 9 9"><path d="M0 4.500h9M4.500 0v9" stroke="#1d7fe0" stroke-width="1.500"/></svg></span></button>`
      : html`<button aria-label=${n}>${icon(n)}</button>`)}</div>`);
  }
}

/* ---------- 3D viewport with the meshed assembly ---------- */

type Pt = [number, number];
const pts = (p: Pt[]) => p.map(([x, y]) => `${x.toFixed(1)},${y.toFixed(1)}`).join(" ");

/* A line of mesh nodes whose spacing widens slowly to the right. */
const nodes = (from: number, to: number, x0: number, step: number, grow: number, y: (x: number) => number): Pt[] => {
  const out: Pt[] = [];
  for (let i = from; i <= to; i++) { const x = x0 + step * i + grow * i * i; out.push([x, y(x)]); }
  return out;
};
const slope = (x0: number, y0: number, x1: number, y1: number) => (x: number) => y0 + ((y1 - y0) * (x - x0)) / (x1 - x0);
const zig = (a: Pt[], b: Pt[]) => pts([...a, ...b].sort((p, q) => p[0] - q[0]));
const mix = (a: Pt, b: Pt, t: number): Pt => [a[0] + (b[0] - a[0]) * t, a[1] + (b[1] - a[1]) * t];

const quad = (tl: Pt, tr: Pt, br: Pt, bl: Pt, cols: number, levels: number[], fill: string) => {
  const lines: string[] = [];
  for (let i = 1; i < cols; i++) lines.push(`M${mix(tl, tr, i / cols)}L${mix(bl, br, i / cols)}`);
  for (const t of levels) lines.push(`M${mix(tl, bl, t)}L${mix(tr, br, t)}`);
  return svg`<polygon points=${pts([tl, tr, br, bl])} fill=${fill}/><path d=${lines.join("")} fill="none"/>`;
};

@customElement("view-port")
class ViewPort extends LitElement {
  static styles = [base, css`
    :host { flex: 1; min-width: 0; position: relative; overflow: hidden; border-left: 1px solid #4d5563; border-top: 1px solid #4d5563; background: linear-gradient(#1b2d48, #304059 83%, #526280); }
    .scene { width: 100%; height: 100%; }
    .axis { font: 12px "Liberation Serif", serif; fill: #f5f50a; }
    .mark { position: absolute; left: 40px; top: 93px; width: 548px; height: 273px; border: 3px solid #fa1408; border-radius: 2px; }
    .credit { position: absolute; right: 3px; bottom: 5px; font: 300 20px/26px Roboto, "Noto Sans CJK SC", sans-serif; color: #c9cdd3; text-shadow: 1px 1px 1px rgba(20, 25, 40, .6); white-space: nowrap; }
  `];
  topBar() {
    const a = nodes(0, 21, 529, 19.26, 0.045, slope(529, 237, 953, 232));
    const b = nodes(0, 24, 499, 19.35, 0.041, slope(480, 255, 987, 247));
    const c = nodes(-6, 15, 628.6, 19.85, 0.05, slope(511, 272.5, 937, 267));
    const d = nodes(0, 9, 619.3, 19.5, 0.03, slope(484, 284, 985, 277.5));
    const edge = "480,254 481,240 484,236 500,235 735,231.500 935,228 966,227 980,228 983,230 987,247 987,262 985,277 930,278.500 735,281 515,283.500 484,284 480,270";
    return svg`
      <polygon points=${edge} fill="#409b40"/>
      <polygon points=${pts([[480, 255], ...b.slice(0, 24), [987, 247], [985, 277], [484, 284], [480, 270]])} fill="#3a8e3a" stroke="none"/>
      <polygon points=${pts([[480, 266], [493, 268], ...c, [957, 264], [974, 262], [987, 266], [985, 277], [735, 281], [484, 284]])} fill="#2e742f" stroke="none"/>
      <g fill="none">
        <polygon points="560,235 735,231.500 935,228 960,228 935,232 735,234.500 540,237" fill="#235a25" stroke="none"/>
        <polyline points=${pts([[484, 237], [493, 242], [509, 239.5], ...a, [966, 230]])}/>
        <polyline points=${pts([[480, 255], ...b])}/>
        <polyline points=${pts([[480, 266], [493, 268], ...c, [957, 264], [974, 262], [987, 266]])}/>
        <polyline points=${pts([[499, 254], [509, 240], [518, 254]])}/>
        <polyline points=${zig(a, b.slice(1, 24))}/>
        <polyline points=${zig(b.slice(0, 24), c)}/>
        <polyline points=${zig(c.slice(6), d)}/>
        <path d="M493 242l-13 13M493 242l6 12M480 254l13 14l6 -14M493 268l3 12l-15 -12M496 280l12 -9l8 10M484 284l12 -4l10 4M508 240l-8 -5M500 235l-7 7"/>
        <path d="M953 232l18 4l12 -6M971 236l-5 -9l17 2M971 236l-5 12M971 236l16 11M987 247l-13 14l-8 -13M974 262l-4 12l17 -7M957 264l13 10l15 3M957 264l-16 14M957 264l9 13"/>
        <polygon points=${edge}/>
      </g>`;
  }
  bottomBar() {
    const a = nodes(0, 21, 507.3, 20.8, 0.051, () => 389.3);
    const b = nodes(-2, 21, 516.7, 21, 0.052, () => 403.5);
    const c = nodes(0, 19, 526, 21.2, 0.057, slope(526, 425.3, 950, 426));
    const d = nodes(0, 19, 516, 21.3, 0.046, slope(491, 441, 937, 443.5));
    const edge = "456,400 457,390 475,388 507,389 966,389 980,388 999,390 1004,402 1007,425 1006,443 986,446 966,443.500 735,443 491,441 472,443.500 456,441 453,425";
    return svg`
      <polygon points=${edge} fill="#409b40"/>
      <polygon points=${pts([[457, 391], [999, 391], [1003, 403.5], [474, 403.5]])} fill="#3c923c" stroke="none"/>
      <polygon points=${pts([[453, 424], [466, 418], [483, 422], [503, 424.5], ...c, [973, 423], [992, 419], [1007, 426], [1006, 443], [986, 446], [966, 443], [491, 441], [472, 443], [455, 441]])} fill="#338034" stroke="none"/>
      <g fill="none">
        <polyline points=${pts([[456, 403], ...b, [1004, 403.5]])}/>
        <polyline points=${pts([[466, 418], [483, 422], [503, 424.5], ...c, [973, 423], [992, 419]])}/>
        <polyline points=${zig(a, b.slice(1))}/>
        <polyline points=${pts([[474, 403.5], [483, 422], [495.5, 403.5], [503, 424.5], [516.7, 403.5]])}/>
        <polyline points=${zig(b.slice(2, 22), c)}/>
        <polyline points=${zig(c, d)}/>
        <path d="M456 403l14 -10l4 11l13 -15l9 14M457 389l13 4l17 -3M474 404l-8 14l-11 -16M466 418l-12 8l15 8l-3 -16M469 434l14 -12l8 18zM469 434l3 9M469 434l-14 6M491 441l12 -17l13 17"/>
        <path d="M966 389l15 15l4 -16M966 389l20 3l13 -2M986 392l17 11M981 404l11 15l12 -16M958 404l15 19l8 -19M950 426l16 17l7 -20l16 13M989 436l3 -17l15 7l-18 10M989 436l17 7M989 436l-3 10M989 436l-23 7M937 443l13 -17"/>
        <polygon points=${edge}/>
      </g>`;
  }
  leftBlock() {
    const v = [0.185, 0.38, 0.58, 0.79];
    return svg`
      <polygon points="615.700,269.700 618,283 624,323 622,389 615.700,389 611.300,360" fill="#235a25"/>
      <path fill="none" d="M616 279l5 42l-1 68M615 290l3 30l-1 69M614 300l2 30v50M613 345l11 -22M612 358l12 -25M614 330l10 -7M614 300l5 -8M614 312l7 -10M613 370l10 -20M615 380l8 -17"/>
      ${quad([505.3, 360], [611.3, 360], [615.7, 389], [513.7, 389], 5, [0.38, 0.75], "#2f7430")}
      ${quad([515.7, 270.3], [615.7, 269.7], [611.3, 360], [505.3, 360], 5, v, "#409b40")}`;
  }
  rightBlock() {
    const v = [0.19, 0.385, 0.585, 0.79];
    return svg`
      <polygon points="820.700,266.300 819,283 817,322 823,389 828.300,389 830.700,358.700" fill="#235a25"/>
      <path fill="none" d="M821 275l-2 45l7 69M822 290l0 32l4 50M823 300l2 30l3 45M817 322l11 22M818 334l11 22M818 305l8 22M819 290l6 22M820 350l9 22M821 365l7 16"/>
      ${quad([830.7, 358.7], [943.7, 358.7], [937.3, 389], [828.3, 389], 5, [0.38, 0.75], "#2f7430")}
      ${quad([820.7, 266.3], [926.7, 265.3], [943.7, 358.7], [830.7, 358.7], 5, v, "#409b40")}`;
  }
  render() {
    return html`<svg class="scene" viewBox="413 117 618 451" preserveAspectRatio="xMinYMin meet" role="img" aria-label="Meshed assembly">
        <path d="M529 133l6.500 29.500M535.500 162.500l44 -1M535.500 162.500l-4 33" fill="none" stroke="#e6e60c" stroke-width="1.200"/>
        <text class="axis" x="528" y="130">Y</text><text class="axis" x="583" y="161">X</text><text class="axis" x="530" y="201">Z</text>
        <g stroke="#071407" stroke-width="1" stroke-linejoin="round">
          ${this.topBar()}${this.leftBlock()}${this.rightBlock()}${this.bottomBar()}
        </g>
      </svg>
      <span class="mark"></span>
      <span class="credit">CSDN @动力资料屋</span>`;
  }
}

/* ---------- page ---------- */

@customElement("app-root")
class AppRoot extends LitElement {
  static styles = [base, css`
    :host { display: flex; flex-direction: column; height: 100vh; overflow: hidden; background: #fbfbfb; color: #000; font: 13px "Noto Sans", "Open Sans", sans-serif; }
    .main { flex: 1; min-height: 0; display: flex; }
    .work { flex: 1; min-width: 0; display: flex; flex-direction: column; margin-left: 5px; }
    .context { display: flex; align-items: center; height: 33px; padding-left: 8px; background: linear-gradient(#fcfcfc, #ebebeb); }
    .context span { white-space: nowrap; width: 55px; }
    .context combo-box { height: 26px; margin-right: 13px; flex: none; }
    .context .mid { width: 46px; }
    .context .end { width: 36px; }
    .module { width: 119px; }
    .model { width: 161px; }
    .step { width: 108px; }
    .stage { flex: 1; min-height: 0; display: flex; }
  `];
  render() {
    return html`
      <menu-bar></menu-bar>
      <tool-bars></tool-bars>
      <div class="main">
        <model-tree></model-tree>
        <div class="work">
          <div class="context">
            <span>Module:</span><combo-box class="module" label="Module" spinner value="Assembly"></combo-box>
            <span class="mid">Model:</span><combo-box class="model" label="Model" spinner value="abaqus_contact_3D"></combo-box>
            <span class="end">Step:</span><combo-box class="step" label="Step" spinner first value="Initial"></combo-box>
          </div>
          <div class="stage"><tool-box></tool-box><view-port></view-port></div>
        </div>
      </div>`;
  }
}
